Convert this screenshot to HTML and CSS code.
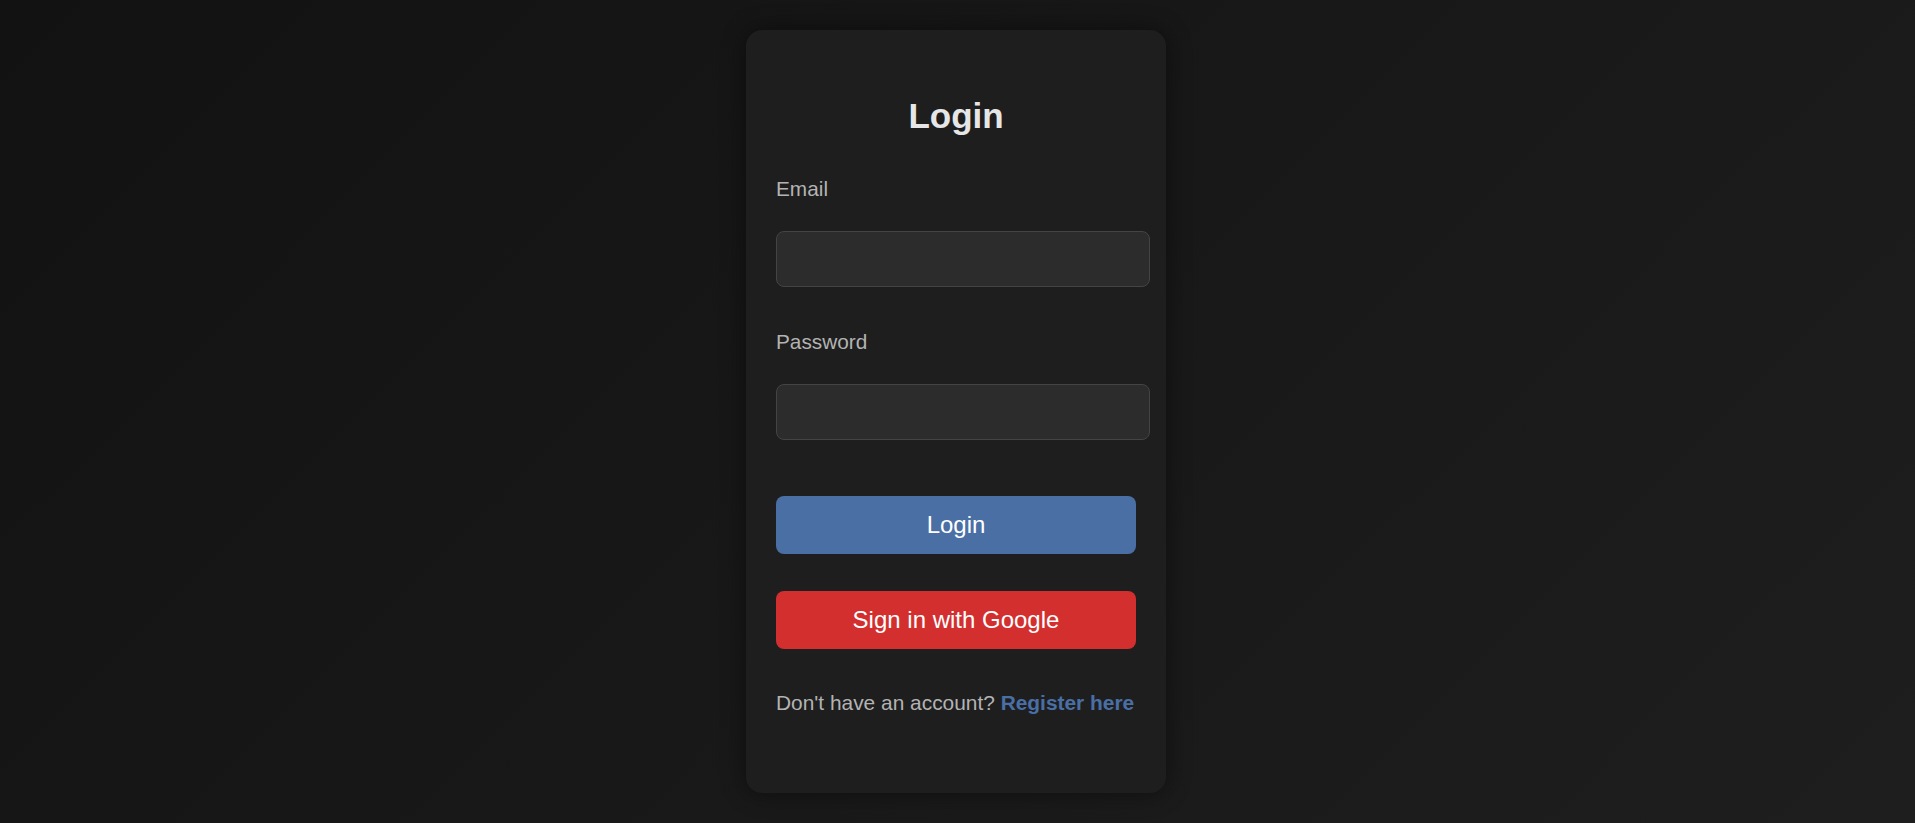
FILE: index.html
```html
<!DOCTYPE html>
<html lang="en">
<head>
<meta charset="utf-8">
<title>Login</title>
<link rel="stylesheet" href="styles.css">
</head>
<body>
<main class="card">
  <h2 class="title">Login</h2>
  <form class="form">
    <div class="field">
      <label class="label" for="email">Email</label>
      <input class="input" id="email" type="email">
    </div>
    <div class="field">
      <label class="label" for="password">Password</label>
      <input class="input" id="password" type="password">
    </div>
    <button class="btn btn-primary" type="button">Login</button>
    <button class="btn btn-google" type="button">Sign in with Google</button>
  </form>
  <p class="footer">Don't have an account? <a class="link" href="#">Register here</a></p>
</main>
</body>
</html>
```
FILE: styles.css
```css
* { box-sizing: border-box; }
html, body { height: 100%; }
body {
  margin: 0;
  min-height: 100vh;
  padding-right: 3px;
  display: flex;
  align-items: center;
  justify-content: center;
  background: linear-gradient(135deg, #121212 0%, #1e1e1e 100%);
  font-family: "Liberation Sans", Arial, sans-serif;
  color: #e0e0e0;
}
.card {
  width: 420px;
  background: #1e1e1e;
  border-radius: 16px;
  box-shadow: 0 0 24px rgba(0, 0, 0, 0.45);
  padding: 66px 30px 78px;
}
.title {
  margin: 0;
  text-align: center;
  font-size: 35px;
  line-height: 40px;
  font-weight: 700;
  color: #e6e6e6;
}
.form {
  display: flex;
  flex-direction: column;
  margin-top: 41px;
}
.field {
  display: flex;
  flex-direction: column;
}
.field + .field { margin-top: 43px; }
.label {
  font-size: 20.8px;
  line-height: 24px;
  color: #b3b3b3;
}
.input {
  margin-top: 30px;
  width: calc(100% + 14px);
  height: 56px;
  background: #2c2c2c;
  border: 1px solid #444;
  border-radius: 8px;
  color: #e0e0e0;
  font-size: 20.8px;
  padding: 0 12px;
  font-family: inherit;
}
.btn {
  width: 100%;
  height: 58px;
  border: none;
  border-radius: 8px;
  color: #ffffff;
  font-family: inherit;
  font-size: 24px;
  cursor: pointer;
}
.btn-primary {
  margin-top: 56px;
  background: #4a6fa5;
}
.btn-google {
  margin-top: 37px;
  background: #d32f2f;
}
.footer {
  margin: 41px 0 0;
  font-size: 20.9px;
  line-height: 25px;
  color: #b3b3b3;
}
.link {
  color: #4a6fa5;
  font-weight: 700;
  text-decoration: none;
}
```
